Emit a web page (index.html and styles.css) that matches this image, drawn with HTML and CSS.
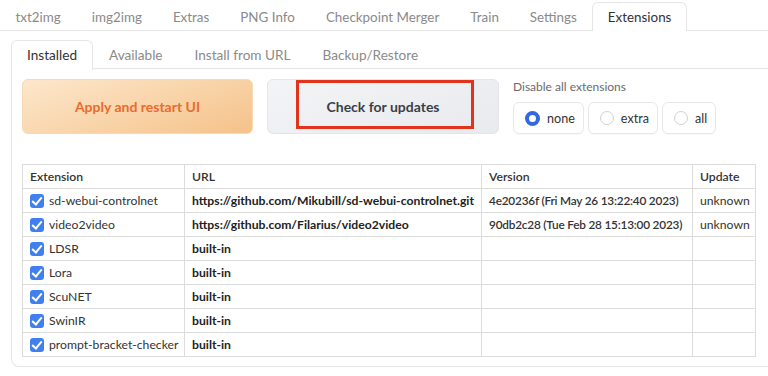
FILE: index.html
```html
<!DOCTYPE html>
<html lang="en">
<head>
  <meta charset="UTF-8">
  <title>Extensions</title>
  <link rel="stylesheet" href="styles.css">
</head>
<body>
  <div class="top-tabs">
    <div class="top-tab">txt2img</div>
    <div class="top-tab">img2img</div>
    <div class="top-tab">Extras</div>
    <div class="top-tab">PNG Info</div>
    <div class="top-tab">Checkpoint Merger</div>
    <div class="top-tab">Train</div>
    <div class="top-tab">Settings</div>
    <div class="top-tab active">Extensions</div>
  </div>

  <div class="ext-area">
    <div class="sub-tabs">
      <div class="sub-tab active">Installed</div>
      <div class="sub-tab">Available</div>
      <div class="sub-tab">Install from URL</div>
      <div class="sub-tab">Backup/Restore</div>
    </div>

    <div class="sub-panel">
      <div class="actions">
        <button class="btn btn-primary">Apply and restart UI</button>
        <div class="btn-wrap">
          <button class="btn btn-secondary">Check for updates</button>
          <div class="highlight"></div>
        </div>
        <div class="disable-group">
          <div class="disable-label">Disable all extensions</div>
          <div class="radios">
            <label class="radio selected"><span class="dot"></span>none</label>
            <label class="radio"><span class="dot"></span>extra</label>
            <label class="radio"><span class="dot"></span>all</label>
          </div>
        </div>
      </div>

      <table class="ext-table">
        <colgroup>
          <col class="col-name">
          <col class="col-url">
          <col class="col-ver">
          <col class="col-upd">
        </colgroup>
        <thead>
          <tr>
            <th>Extension</th>
            <th>URL</th>
            <th>Version</th>
            <th>Update</th>
          </tr>
        </thead>
        <tbody>
          <tr>
            <td><span class="check"></span>sd-webui-controlnet</td>
            <td class="url">https://github.com/Mikubill/sd-webui-controlnet.git</td>
            <td class="ver">4e20236f (Fri May 26 13:22:40 2023)</td>
            <td>unknown</td>
          </tr>
          <tr>
            <td><span class="check"></span>video2video</td>
            <td class="url">https://github.com/Filarius/video2video</td>
            <td class="ver">90db2c28 (Tue Feb 28 15:13:00 2023)</td>
            <td>unknown</td>
          </tr>
          <tr>
            <td><span class="check"></span>LDSR</td>
            <td class="url">built-in</td>
            <td></td>
            <td></td>
          </tr>
          <tr>
            <td><span class="check"></span>Lora</td>
            <td class="url">built-in</td>
            <td></td>
            <td></td>
          </tr>
          <tr>
            <td><span class="check"></span>ScuNET</td>
            <td class="url">built-in</td>
            <td></td>
            <td></td>
          </tr>
          <tr>
            <td><span class="check"></span>SwinIR</td>
            <td class="url">built-in</td>
            <td></td>
            <td></td>
          </tr>
          <tr>
            <td><span class="check"></span>prompt-bracket-checker</td>
            <td class="url">built-in</td>
            <td></td>
            <td></td>
          </tr>
        </tbody>
      </table>
    </div>
  </div>
</body>
</html>
```

FILE: styles.css
```css
body {
  margin: 0;
  padding: 0;
  font-family: 'Lato', 'Noto Sans', sans-serif;
  background-color: #fff;
  color: #333;
  overflow: hidden;
  width: 768px;
  height: 376px;
}

/* barra de pestañas superior */
.top-tabs {
  display: flex;
  height: 28px;
  padding-top: 2px;
  border-bottom: 1px solid #e6e6e6;
}

.top-tab {
  padding: 0 14.5px;
  line-height: 28px;
  font-size: 13.4px;
  color: #8a8a8a;
  border: 1px solid transparent;
  border-bottom: none;
  border-radius: 6px 6px 0 0;
}

.top-tab.active {
  color: #333;
  background-color: #fff;
  border-color: #e6e6e6;
  margin-bottom: -1px;
  height: 28px;
}

.ext-area {
  margin: 9px 0 0 11px;
  width: 790px;
}

.sub-tabs {
  display: flex;
  height: 28px;
  border-bottom: 1px solid #e6e6e6;
}

.sub-tab {
  padding: 0 15px;
  line-height: 28px;
  font-size: 13.6px;
  color: #8a8a8a;
  border: 1px solid transparent;
  border-bottom: none;
  border-radius: 6px 6px 0 0;
}

.sub-tab.active {
  color: #333;
  background-color: #fff;
  border-color: #e6e6e6;
  margin-bottom: -1px;
  height: 29px;
}

.sub-panel {
  border: 1px solid #e6e6e6;
  border-top: none;
  border-radius: 0 0 8px 8px;
  padding: 10px 10px 9px 10px;
}

.actions {
  display: flex;
  gap: 14px;
  align-items: flex-start;
}

.btn {
  width: 231px;
  height: 55px;
  border-radius: 6px;
  font-family: 'Lato', 'Noto Sans', sans-serif;
  font-size: 14px;
  font-weight: bold;
  cursor: pointer;
}

.btn-primary {
  color: #ea6b2f;
  background: linear-gradient(160deg, #fde7cc 0%, #f8d1a4 60%, #f5c28a 100%);
  border: 1px solid #f7d9b6;
}

.btn-wrap {
  position: relative;
}

.btn-secondary {
  width: 232px;
  color: #3a3f47;
  background: linear-gradient(160deg, #f3f4f6 0%, #e9eaed 100%);
  border: 1px solid #e4e5e8;
}

/* recuadro rojo de la captura */
.highlight {
  position: absolute;
  left: 29px;
  top: 1px;
  width: 172px;
  height: 43px;
  border: 3px solid #e2341d;
}

.disable-group {
  padding-top: 1px;
}

.disable-label {
  font-size: 12px;
  color: #6b6b6b;
  height: 22px;
  line-height: 14px;
}

.radios {
  display: flex;
  gap: 4px;
}

.radio {
  display: flex;
  align-items: center;
  height: 30px;
  padding: 0 8px 0 11px;
  border: 1px solid #e8e8e8;
  border-radius: 6px;
  font-size: 12.6px;
  color: #333;
  box-shadow: 0 1px 1px rgba(0, 0, 0, 0.03);
}

.radio .dot {
  width: 14px;
  height: 14px;
  border: 1px solid #d2d2d2;
  border-radius: 50%;
  margin-right: 7px;
  box-sizing: border-box;
}

.radio.selected .dot {
  border: 4px solid #3368e0;
  background-color: #fff;
  width: 15px;
  height: 15px;
}

.ext-table {
  margin-top: 30px;
  width: 733px;
  table-layout: fixed;
  border-collapse: collapse;
  font-size: 12.2px;
}

.col-name { width: 162px; }
.col-url { width: 297px; }
.col-ver { width: 211px; }
.col-upd { width: 63px; }

.ext-table th,
.ext-table td {
  border: 1px solid #dcdcdc;
  height: 23px;
  padding: 0 7px;
  text-align: left;
  white-space: nowrap;
  overflow: hidden;
}

.ext-table th {
  font-weight: 600;
  color: #333;
}

.ext-table td.url {
  font-weight: bold;
  color: #222;
}

.ext-table td.ver {
  font-weight: 600;
  font-size: 11.8px;
  letter-spacing: -0.2px;
  color: #333;
}

.check {
  display: inline-block;
  width: 14px;
  height: 14px;
  border-radius: 3px;
  background-color: #3f7ff0;
  vertical-align: -3px;
  margin-right: 5px;
  position: relative;
}

.check::after {
  content: '';
  position: absolute;
  left: 4px;
  top: 1px;
  width: 4px;
  height: 8px;
  border: solid #fff;
  border-width: 0 2px 2px 0;
  transform: rotate(40deg);
}
```
